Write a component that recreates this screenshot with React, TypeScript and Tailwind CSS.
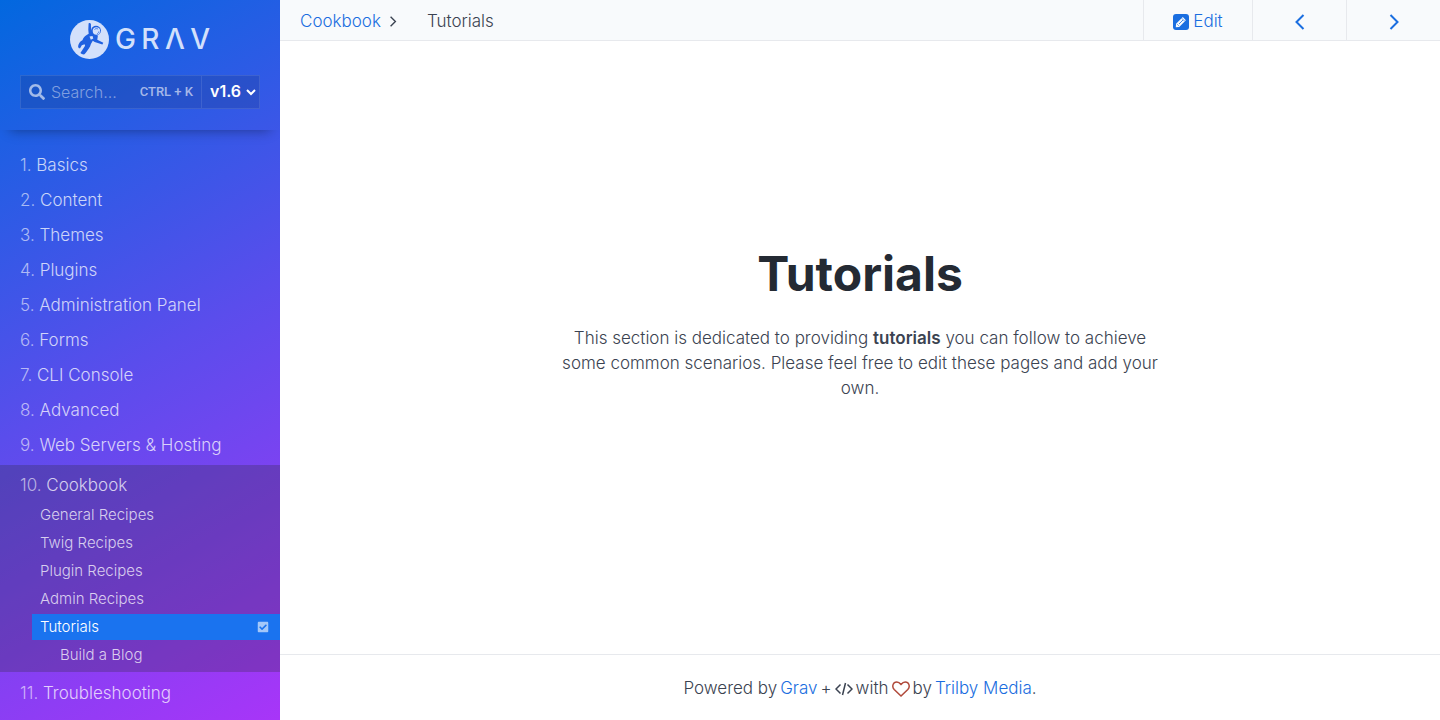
import { FaCheckSquare, FaSearch } from "react-icons/fa";

const chapters = [
  "Basics",
  "Content",
  "Themes",
  "Plugins",
  "Administration Panel",
  "Forms",
  "CLI Console",
  "Advanced",
  "Web Servers & Hosting",
];

const recipes = ["General Recipes", "Twig Recipes", "Plugin Recipes", "Admin Recipes"];

const Angle = ({ left = false, className = "" }: { left?: boolean; className?: string }) => (
  <svg viewBox="0 0 10 16" className={className} fill="none" stroke="currentColor" strokeWidth="2">
    <path d={left ? "M8.5 1 1.5 8l7 7" : "M1.5 1 8.5 8l-7 7"} />
  </svg>
);

const Astronaut = () => (
  <svg viewBox="0 0 39 39" className="size-[39px] text-[#1f60e0]" aria-hidden="true">
    <circle cx="19.5" cy="19.5" r="19.5" fill="#d3e0fb" />
    <g fill="currentColor">
      <path d="M18.6 3.4c.8-.7 1.9-.4 2.3.7l.2 6.4c1 .2 1.8.8 2.4 1.6 1 1.8 2.4 3 4.4 3.3l-.6 4.4 6 3-.9 1.7-7.7-2.6-1.9-1.2-1.9 3.3c-.7 3-2.6 5.4-4.9 8.5l-1.5 1.8c-1.5.3-3.1-.2-4.1-1.3l4.7-7.3-.5-1.5-2.8 1.1-1.7 2.9c-1 .5-2-.5-2-1.9.3-2.7 1.9-4.8 4.3-6.1 1.2-3.2 3.5-5 6.3-6.5l-.4-4z" />
      <circle cx="26" cy="10.6" r="4.9" />
    </g>
    <circle cx="26.4" cy="11" r="3.7" fill="#d3e0fb" />
    <path d="M24.5 9.5c1-1 2.5-1.1 3.6-.4M28.8 11.5c0 1-.6 1.8-1.5 2.1" fill="none" stroke="currentColor" strokeWidth=".8" />
    <path d="m19.5 16.5 3-.5.8 2.5-2.5 1.3z" fill="#d3e0fb" />
  </svg>
);

const Sidebar = () => (
  <aside className="flex w-[280px] shrink-0 flex-col overflow-hidden bg-linear-[150deg] from-[#0268df] via-[#5a4dec] to-[#a835f8] text-[17px] text-white/75">
    <div className="h-[130px] shrink-0 px-5 pt-5 shadow-[0_10px_12px_-10px_rgba(0,0,0,0.4)]">
      <a href="#" aria-label="Grav" className="mx-auto flex w-[140px] items-center gap-1.5 text-[#d3e0fb]">
        <Astronaut />
        <span className="flex flex-1 justify-between text-[28px] leading-[39px] font-medium">
          <span>G</span>
          <span>R</span>
          <span>Λ</span>
          <span>V</span>
        </span>
      </a>
      <div className="mt-4 flex h-[34px] border border-white/10 bg-[#1f3a8a]/30">
        <label className="flex min-w-0 flex-1 items-center gap-1.5 pl-2">
          <FaSearch className="size-4 shrink-0 text-white/60" />
          <input
            type="text"
            aria-label="Search"
            placeholder="Search..."
            className="w-0 min-w-0 flex-1 bg-transparent text-base font-light outline-none placeholder:text-white/45"
          />
          <span className="pr-2 font-['Roboto'] text-[13px] font-medium text-white/60">CTRL + K</span>
        </label>
        <select
          aria-label="Version"
          className="w-[58px] appearance-auto border-l border-white/10 bg-transparent pb-0.5 pl-1 text-base font-semibold text-white"
        >
          <option>v1.6</option>
        </select>
      </div>
    </div>

    <nav className="pt-[18px]">
      <ol>
        {chapters.map((chapter, i) => (
          <li key={chapter}>
            <a href="#" className="block px-5 leading-[35px] font-light">
              <span className="text-white/60">{i + 1}.</span> {chapter}
            </a>
          </li>
        ))}
        <li className="mt-0.5 bg-[#282828]/25 pt-[3px] pb-1">
          <a href="#" className="block px-5 leading-[34px] font-light">
            <span className="text-white/60">10.</span> Cookbook
          </a>
          <ul className="flex flex-col gap-0.5 text-[15px] leading-[26px] font-light">
            {recipes.map((recipe) => (
              <li key={recipe}>
                <a href="#" className="block pl-10">
                  {recipe}
                </a>
              </li>
            ))}
            <li>
              <a href="#" className="ml-8 flex items-center justify-between bg-[#1a73ef] pr-[11px] pl-2 text-white">
                Tutorials
                <FaCheckSquare className="size-3 text-white/60" />
              </a>
            </li>
            <li>
              <a href="#" className="block pl-[60px]">
                Build a Blog
              </a>
            </li>
          </ul>
        </li>
        <li>
          <a href="#" className="mt-1 block px-5 leading-[35px] font-light">
            <span className="text-white/60">11.</span> Troubleshooting
          </a>
        </li>
      </ol>
    </nav>
  </aside>
);

const TopBar = () => (
  <header className="flex h-[41px] shrink-0 items-stretch border-b border-[#e7e9ed] bg-[#f8fafc] text-[17px] font-light">
    <div className="flex flex-1 items-center pt-[3px] pl-5">
      <a href="#" className="text-[#1a6ee0]">
        Cookbook
      </a>
      <Angle className="mr-[30px] ml-2 h-[11px] w-2" />
      <span>Tutorials</span>
    </div>
    <a href="#" className="flex w-[109px] items-center justify-center gap-1 border-l border-[#e7e9ed] pt-[3px] text-[#1a6ee0]">
      <svg viewBox="0 0 16 16" className="size-4" aria-hidden="true">
        <rect width="16" height="16" rx="3" fill="currentColor" />
        <path d="m2.800 13.200.3-3.400 6.700-6.700 3.100 3.100-6.700 6.700z" fill="#f8fafc" />
        <path d="m4.300 10.300 1.400 1.400M6 10l4-4" stroke="currentColor" strokeWidth=".8" />
        <path d="m8.700 4.200 3.100 3.100" stroke="currentColor" strokeWidth=".7" />
      </svg>
      Edit
    </a>
    <a href="#" aria-label="Previous" className="flex w-[94px] items-center justify-center border-l border-[#e7e9ed] pt-[3px] text-[#1a6ee0]">
      <Angle left className="h-4 w-2.5" />
    </a>
    <a href="#" aria-label="Next" className="flex w-[94px] items-center justify-center border-l border-[#e7e9ed] pt-[3px] text-[#1a6ee0]">
      <Angle className="h-4 w-2.5" />
    </a>
  </header>
);

const Footer = () => (
  <footer className="flex h-[66px] shrink-0 items-center justify-center gap-[3px] border-t border-[#e7e9ed] pt-0.5 text-[17px] font-light">
    <span>Powered by</span>
    <a href="#" className="text-[#1a6ee0]">
      Grav
    </a>
    <span>+</span>
    <svg viewBox="0 0 18 16" className="h-4 w-[18px]" fill="none" stroke="currentColor" strokeWidth="1.5" aria-hidden="true">
      <path d="M5.5 3.5 1 8l4.5 4.5M12.5 3.5 17 8l-4.5 4.5M10.5 2l-3 12" />
    </svg>
    <span>with</span>
    <svg viewBox="0 0 18 16" className="h-4 w-[18px] text-[#b0493a]" fill="none" stroke="currentColor" strokeWidth="1.5" aria-hidden="true">
      <path d="M9 15 2.2 8.5C-.5 5.5 1 1 4.8 1 6.8 1 8 2.2 9 3.4 10 2.2 11.2 1 13.2 1 17 1 18.5 5.5 15.8 8.5z" />
    </svg>
    <span>by</span>
    <span>
      <a href="#" className="text-[#1a6ee0]">
        Trilby Media
      </a>
      .
    </span>
  </footer>
);

const App = () => {
  return (
    <div className="flex h-screen overflow-hidden bg-white font-['Inter',sans-serif] text-[#3b4351]">
      <Sidebar />
      <div className="flex min-w-0 flex-1 flex-col">
        <TopBar />
        <main className="flex flex-1 flex-col items-center justify-center pb-12 text-center">
          <h1 className="mb-6 text-[48px] leading-[56px] font-bold text-[#242a33]">Tutorials</h1>
          <p className="max-w-[600px] text-[17px] leading-[25px] font-light">
            This section is dedicated to providing <strong className="font-semibold">tutorials</strong> you can follow to
            achieve some common scenarios. Please feel free to edit these pages and add your own.
          </p>
        </main>
        <Footer />
      </div>
    </div>
  );
};

export default App;
